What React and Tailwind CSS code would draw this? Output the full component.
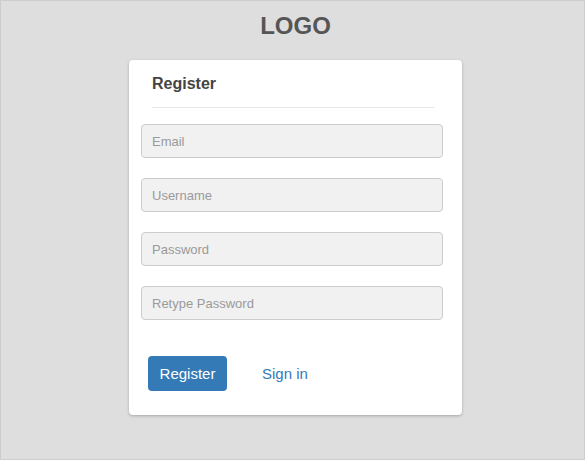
export default function App() {
  const fields = ["Email", "Username", "Password", "Retype Password"];
  return (
    <div
      className="flex h-[460px] w-[585px] flex-col items-center border border-[#cdcdcd] bg-[#dedede] pl-[6px]"
      style={{ fontFamily: '"Liberation Sans", Arial, sans-serif' }}
    >
      <h1 className="mt-[11px] text-[24px] font-bold leading-[28px] text-[#555555]">LOGO</h1>
      <section className="mt-[20px] flex w-[333px] flex-col rounded-[4px] bg-white pb-[24px] pt-[12px] shadow-[0_1px_3px_rgba(0,0,0,0.25)]">
        <h2 className="ml-[23px] text-[16px] font-bold leading-[24px] text-[#444444]">Register</h2>
        <div className="ml-[23px] mt-[11px] h-px w-[282px] bg-[#e6e6e6]" />
        <div className="ml-[12px] mt-[16px] flex flex-col gap-[20px]">
          {fields.map((f) => (
            <input
              key={f}
              placeholder={f}
              type={f.includes("Password") ? "password" : "text"}
              className="h-[34px] w-[302px] rounded-[4px] border border-[#cccccc] bg-[#f1f1f1] px-[10px] text-[13px] text-[#555] outline-none placeholder:text-[#9a9a9a]"
            />
          ))}
        </div>
        <div className="ml-[19px] mt-[36px] flex items-center gap-[35px]">
          <button className="h-[35px] w-[79px] rounded-[4px] bg-[#337ab7] pt-px text-[15px] text-white">
            Register
          </button>
          <a className="pt-px text-[15px] text-[#337ab7]">Sign in</a>
        </div>
      </section>
    </div>
  );
}
